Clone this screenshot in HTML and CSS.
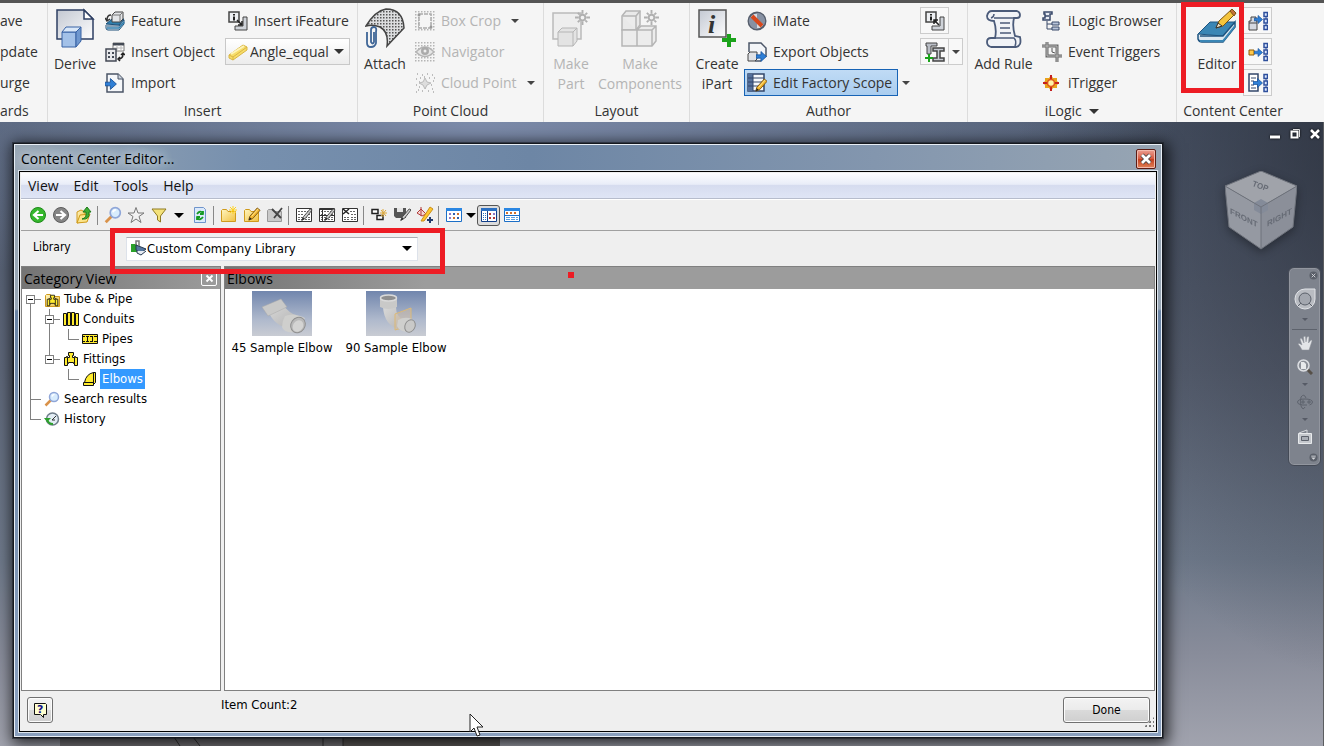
FILE: index.html
```html
<!DOCTYPE html>
<html lang="en">

<head>
  <meta charset="UTF-8">
  <meta name="viewport" content="width=device-width, initial-scale=1.0">
  <title>Content Center Editor</title>
  <link rel="stylesheet" href="styles.css">
</head>

<body>
  <!-- shared icon parts -->
  <svg class="defs" aria-hidden="true">
    <defs>
      <linearGradient id="g-page" x1="0" y1="0" x2="1" y2="1">
        <stop offset="0" stop-color="#c3c8d2" />
        <stop offset="1" stop-color="#fdfdfe" />
      </linearGradient>
      <linearGradient id="g-thumb" x1="0" y1="0" x2="0" y2="1">
        <stop offset="0" stop-color="#7186ad" />
        <stop offset=".65" stop-color="#b0bacd" />
        <stop offset="1" stop-color="#c9ccd3" />
      </linearGradient>
      <linearGradient id="g-pipe" x1="0" y1="0" x2="1" y2="1">
        <stop offset="0" stop-color="#d9d9d8" />
        <stop offset="1" stop-color="#b3b3b4" />
      </linearGradient>
      <linearGradient id="g-folder" x1="0" y1="0" x2="1" y2="1">
        <stop offset="0" stop-color="#fff6c0" />
        <stop offset="1" stop-color="#f0c040" />
      </linearGradient>
      <pattern id="dots" width="3" height="3" patternUnits="userSpaceOnUse">
        <rect width="1.500" height="1.500" fill="#b5b5b5" />
      </pattern>
      <pattern id="dots-dark" width="3" height="3" patternUnits="userSpaceOnUse">
        <rect width="3" height="3" fill="#dcdddf" />
        <rect width="1.500" height="1.500" fill="#555" />
      </pattern>
      <symbol id="magnifier" viewBox="0 0 16 16">
        <path d="M1.500 14.500l6-6" stroke="#d9924a" stroke-width="2.500" />
        <circle cx="10" cy="6" r="4.500" fill="#d8ecfd" stroke="#8fa6d8" stroke-width="1.500" />
        <path d="M8 5.500q.5-2 2.500-2" stroke="#fff" fill="none" stroke-width="1.500" />
      </symbol>
      <symbol id="pencil" viewBox="0 0 16 16">
        <path d="M3 14l1-4 8-9 3 2.500-8 9z" fill="#f3b62c" stroke="#7b5413" />
        <path d="M3 14l1-3 2 1.500z" fill="#222" />
        <path d="M6 10l7-8" stroke="#fde79a" />
      </symbol>
      <symbol id="pen" viewBox="0 0 16 16">
        <path d="M4 13l2-4 7-8 2 1-7 9z" fill="#ccc" stroke="#444" />
        <path d="M3.500 14l2-3.500 1.500 1z" fill="#222" />
      </symbol>
      <symbol id="folder" viewBox="0 0 18 18">
        <path d="M1.500 15.500v-11l1-1h4l1.500 2h7.500v10z" fill="url(#g-folder)" stroke="#cf9a1c" />
      </symbol>
      <symbol id="form" viewBox="0 0 18 18">
        <path d="M1.500 2.500h15v13h-15z" fill="#fff" stroke="#333" />
        <path d="M3 5.500h12M3 8.500h5m2 0h5M3 11.500h5m2 0h5M3 13.500h5m2 0h5" stroke="#666" stroke-dasharray="2 1" />
      </symbol>
      <symbol id="book" viewBox="0 0 20 20">
        <path d="M1 13l6-5h12l-5 6z" fill="#2f7fae" stroke="#1c4f78" />
        <path d="M1 14v3q0 2 2 2h11l5-6v-4l-5 6H2" fill="#e6eef4" stroke="#1c4f78" />
        <path d="M2 17h12l5-6" fill="none" stroke="#2f7fae" stroke-width="1.500" />
      </symbol>
      <symbol id="ladder" viewBox="0 0 6 20">
        <path d="M1 1.500h3.500v4H1zM1 8h3.500v4H1zM1 14.500h3.500v4H1z" fill="#dce8ff" stroke="#2e4f9c" stroke-width="1.500" />
        <path d="M3 6v2m0 4.500v2" stroke="#2e4f9c" />
      </symbol>
      <symbol id="arrow" viewBox="0 0 10 10">
        <path d="M0 3.500h4.500V.5L9.500 5l-5 4.500v-3H0z" fill="#2f7fd6" stroke="#164f96" stroke-width=".7" />
      </symbol>
      <symbol id="spark" viewBox="0 0 16 16">
        <path d="M8 0v4m0 8v4M0 8h4m8 0h4M3 3l2 2m6 6l2 2M3 13l2-2m6-6l2-2" stroke="#b0b0b0" stroke-width="2" />
        <circle cx="8" cy="8" r="3" fill="#f2f2f2" stroke="#b0b0b0" stroke-width="2" />
      </symbol>
      <symbol id="fitting" viewBox="0 0 16 16">
        <path d="M5.500 1.500h5v3h-1v2h2v-1h1v1h2v8h-3v-2h-1v-1h-5v1h-1v2h-3v-8h2v-1h1v1h2v-2h-1z" fill="#ffeb2e" stroke="#111" />
        <path d="M4.500 6.500v6m7-6v6" stroke="#111" />
      </symbol>
    </defs>
  </svg>

  <header class="ribbon">
    <section class="group cut">
      <div class="tools">
        <div class="stack">
          <button class="tool">ave</button>
          <button class="tool">pdate</button>
          <button class="tool">urge</button>
        </div>
      </div>
      <h2>ards</h2>
    </section>

    <section class="group">
      <div class="tools">
        <button class="big">
          <svg viewBox="0 0 40 40">
            <path d="M2 2h27l9 9v20H2z" fill="url(#g-page)" stroke="#2e3f63" stroke-width="1.500" />
            <path d="M29 2v9h9z" fill="#fff" stroke="#2e3f63" stroke-width="1.500" />
            <path d="M7 24h14v15H7z" fill="#a3c1e8" stroke="#3862a5" />
            <path d="M7 24l4-5h15l-5 5z" fill="#d9e7f8" stroke="#3862a5" />
            <path d="M21 24l5-5v14l-5 6z" fill="#6f97ce" stroke="#3862a5" />
          </svg>
          <span>Derive</span>
        </button>
        <div class="stack">
          <button class="tool">
            <svg viewBox="0 0 20 20">
              <use href="#book" />
              <path d="M7 4l3-3h8v7l-3 3H7z" fill="#e3e5e8" stroke="#444" />
              <path d="M7 4h8v7M15 4l3-3" fill="none" stroke="#777" />
              <path d="M2 9q0-5 4-5M0 7l2 3 3-2" fill="none" stroke="#333" stroke-width="1.500" />
            </svg>
            Feature
          </button>
          <button class="tool">
            <svg viewBox="0 0 20 20">
              <path d="M8 1h11v8H8z" fill="#fff" stroke="#777" />
              <path d="M8 1h11v2.500H8z" fill="#444a55" />
              <path d="M8 6h11M12 3v6m4-6v6" stroke="#bbb" />
              <path d="M1 7h10v12H1z" fill="#e8e9ec" stroke="#444a55" stroke-width="1.500" />
              <path d="M3 10h2v2H3zM3 14h2v2H3zM7 10h2v2H7zM7 14h2v2H7z" fill="#444a55" />
              <path d="M13 17q5 0 5-5M16 13l2-2 2 2M15 15l-2 2 2 2" fill="none" stroke="#222" stroke-width="1.500" />
            </svg>
            Insert Object
          </button>
          <button class="tool">
            <svg viewBox="0 0 20 20">
              <path d="M2 1h11l5 5v13H2z" fill="#f5f7fa" stroke="#4b5567" stroke-width="1.500" />
              <path d="M13 1v5h5" fill="#ccd3dd" stroke="#4b5567" />
              <use href="#arrow" x="0" y="5" width="12" height="12" />
            </svg>
            Import
          </button>
        </div>
        <div class="stack ifeature">
          <button class="tool">
            <svg viewBox="0 0 20 20">
              <path d="M1 1h10v10H1z" fill="#eef0f3" stroke="#444" stroke-width="1.500" />
              <path d="M6 3v1.500M6 5.500v4" stroke="#222" stroke-width="2" />
              <path d="M19 6h-4v9H7v4h12z" fill="#cfd3d9" stroke="#444" />
              <path d="M9 9l5 5m0-4v4h-4" stroke="#222" fill="none" stroke-width="1.500" />
            </svg>
            Insert iFeature
          </button>
          <label class="picker">
            <svg viewBox="0 0 20 20">
              <path d="M1 13L15 3l4 2v3L5 18l-4-2z" fill="#f7dd69" stroke="#d9b544" />
              <path d="M1 13l4 2v3M5 15L19 5" fill="none" stroke="#d9b544" />
              <path d="M3 12l13-8" stroke="#fdf4bb" stroke-width="2" />
            </svg>
            <select aria-label="Punch profile">
              <option>Angle_equal</option>
            </select>
            <i class="caret"></i>
          </label>
        </div>
      </div>
      <h2>Insert</h2>
    </section>

    <section class="group">
      <div class="tools">
        <button class="big">
          <svg viewBox="0 0 40 40">
            <path d="M1 18Q10 3 21 1q17 0 18 19L22 38q2-14-7-19-7-3-14-1z" fill="url(#dots-dark)" stroke="#444" stroke-width="1.500" />
            <path d="M9 24v10q-1 3-3 0V22q0-3 3-3t2 5v11q-1 4-5 4t-4-4V24" fill="none" stroke="#3f6697" stroke-width="1.800" />
          </svg>
          <span>Attach</span>
        </button>
        <div class="stack cloud">
          <div class="line">
            <button class="tool" disabled>
              <svg viewBox="0 0 20 20">
                <path d="M0 0h20v20H0z" fill="url(#dots)" />
                <path d="M4 3h12v14H4z" fill="#f5f5f5" stroke="#aaa" stroke-width="1.500" stroke-dasharray="4 1" />
                <circle cx="4" cy="4" r="1.500" fill="#999" />
                <circle cx="16" cy="16" r="1.500" fill="#999" />
              </svg>
              Box Crop
            </button>
            <i class="caret small"></i>
          </div>
          <button class="tool" disabled>
            <svg viewBox="0 0 20 20">
              <path d="M0 0h20v20H0z" fill="url(#dots)" />
              <path d="M1 10q9-10 18 0-9 9-18 0z" fill="#e6e6e6" stroke="#b5b5b5" stroke-width="1.500" />
              <circle cx="10" cy="9" r="4" fill="#aaa" />
              <circle cx="10" cy="9" r="1.500" fill="#eee" />
            </svg>
            Navigator
          </button>
          <div class="line">
            <button class="tool" disabled>
              <svg viewBox="0 0 20 20">
                <path d="M2 1h1M7 2h1M12 1h1M17 2h1M1 6h1M5 5h1M14 5h1M18 8h1M1 12h1M4 9h1M3 17h1M7 18h1M13 18h1M17 16h1M16 12h1M10 15h1M9 4h1M4 14h1M18 19h1M1 19h1M19 5h1" stroke="#aaa" stroke-width="1.500" />
                <path d="M10 5l2 4 4 1-4 2-2 4-2-4-4-2 4-1z" fill="#ddd" stroke="#bbb" />
              </svg>
              Cloud Point
            </button>
            <i class="caret small"></i>
          </div>
        </div>
      </div>
      <h2>Point Cloud</h2>
    </section>

    <section class="group">
      <div class="tools">
        <button class="big" disabled>
          <svg viewBox="0 0 40 40">
            <path d="M2 5h28v26H2z" fill="#eee" stroke="#bbb" stroke-width="1.500" />
            <path d="M7 24h15v14H7zM7 24l4-4h15l-4 4M22 24l4-4v13l-4 5" fill="#e3e3e3" stroke="#b5b5b5" />
            <use href="#spark" x="24" y="2" width="15" height="15" />
          </svg>
          <span>Make<br>Part</span>
        </button>
        <button class="big wide" disabled>
          <svg viewBox="0 0 40 40">
            <path d="M2 8l4-5h14v14l-4 5H2z" fill="#e9e9e9" stroke="#b5b5b5" stroke-width="1.500" />
            <path d="M2 8h14v14M16 8l4-5M2 22h15v16H2zM17 22l4-4h15v15l-4 5H17zM17 22h15v16M32 22l4-4" fill="#ececec" stroke="#b5b5b5" stroke-width="1.500" />
            <use href="#spark" x="24" y="2" width="15" height="15" />
          </svg>
          <span>Make<br>Components</span>
        </button>
      </div>
      <h2>Layout</h2>
    </section>

    <section class="group">
      <div class="tools">
        <button class="big">
          <svg viewBox="0 0 40 40">
            <path d="M2 2h27v27H2z" fill="url(#g-page)" stroke="#555" stroke-width="1.500" />
            <text x="11" y="25" class="serif-i">i</text>
            <path d="M32 26v13M25 32h14" stroke="#1ba31b" stroke-width="4" />
          </svg>
          <span>Create<br>iPart</span>
        </button>
        <div class="stack">
          <button class="tool">
            <svg viewBox="0 0 20 20">
              <circle cx="10" cy="10" r="8.500" fill="#d5dae2" stroke="#555d6b" stroke-width="2" />
              <path d="M10 2a8 8 0 0 1 7 12L10 10zM10 18a8 8 0 0 1-7-12l7 4z" fill="#8791a3" />
              <path d="M5 5l10 10" stroke="#d8481c" stroke-width="4" />
            </svg>
            iMate
          </button>
          <button class="tool">
            <svg viewBox="0 0 20 20">
              <path d="M2 10V1h12l5 5v9M8 19h6" fill="#f3f5f8" stroke="#4b5567" stroke-width="1.500" />
              <path d="M1 12l2-2h7v7l-2 2H1z" fill="#dfe1e5" stroke="#444" />
              <use href="#arrow" x="9" y="9" width="11" height="11" />
            </svg>
            Export Objects
          </button>
          <div class="line">
            <button class="tool active">
              <svg viewBox="0 0 20 20">
                <path d="M1 1h16v17H1z" fill="#f5f8fc" stroke="#33476b" stroke-width="1.500" />
                <path d="M1 1h5v17H1z" fill="#54709c" />
                <path d="M1 5h16M1 9h16M1 13h16M6 1v17" stroke="#33476b" />
                <use href="#pencil" x="6" y="5" width="15" height="15" />
              </svg>
              Edit Factory Scope
            </button>
            <i class="caret small"></i>
          </div>
        </div>
        <div class="stack boxes">
          <button class="box" aria-label="Extract iFeature">
            <svg viewBox="0 0 20 20">
              <path d="M1 1h10v10H1z" fill="#eef0f3" stroke="#444" stroke-width="1.500" />
              <path d="M6 3v1.500M6 5.500v4" stroke="#222" stroke-width="2" />
              <path d="M19 6h-4v9H7v4h12z" fill="#cfd3d9" stroke="#444" />
              <path d="M14 14L9 9m0 4V9h4" stroke="#222" fill="none" stroke-width="1.500" />
            </svg>
          </button>
          <div class="split">
            <button class="box" aria-label="Structural shape">
              <svg viewBox="0 0 20 20">
                <path d="M12 1H1v3h1v8h4V4h6z" fill="#b9bdc5" stroke="#444" />
                <path d="M8 6h11v3h-4v7h4v3H8v-3h4V9H8z" fill="#c5c9d0" stroke="#444" stroke-width="1.500" />
                <path d="M4 12v8M0 16h8" stroke="#1ba31b" stroke-width="2" />
              </svg>
            </button>
            <button class="box thin" aria-label="More shapes"><i class="caret small"></i></button>
          </div>
        </div>
      </div>
      <h2>Author</h2>
    </section>

    <section class="group">
      <div class="tools">
        <button class="big rule">
          <svg viewBox="0 0 40 40">
            <path d="M8 3h25q3 1 3 4t-3 3h-3q-2 8 1 18l5 1q2 9-4 10H7q-4-1-4-5t4-4h4q2-8-1-17-7 0-7-5 1-5 5-5z" fill="#f1f3f7" stroke="#4b5b7a" stroke-width="1.800" />
            <path d="M7 10q3-1 3-4M10 10h20M11 30h19q3 3 1 8M16 15h10M16 20h10M16 25h11" fill="none" stroke="#4b5b7a" stroke-width="1.500" />
          </svg>
          <span>Add Rule</span>
        </button>
        <div class="stack">
          <button class="tool">
            <svg viewBox="0 0 20 20">
              <path d="M2 1h8v2H8v6H1V7h2V3H2zM3 5h4" fill="#e8ecf4" stroke="#3a4a6b" stroke-width="1.500" />
              <path d="M5 10v8h5M5 13h5" fill="none" stroke="#3a4a6b" />
              <path d="M10 11h7v3h-7zM10 16h7v3h-7z" fill="#b9c5da" stroke="#3a4a6b" />
            </svg>
            iLogic Browser
          </button>
          <button class="tool">
            <svg viewBox="0 0 20 20">
              <path d="M5 0v14h15M0 4h15v16" fill="none" stroke="#666" stroke-width="3" />
              <path d="M5 0v14h15M0 4h15v16" fill="none" stroke="#bbb" />
              <path d="M10 6v4l3 1" fill="none" stroke="#555" />
            </svg>
            Event Triggers
          </button>
          <button class="tool">
            <svg viewBox="0 0 20 20">
              <path d="M9 2l2 3h4v3l2 2-2 2v3h-4l-2 3-2-3H3v-3l-2-2 2-2V5h4z" fill="#e8a31c" />
              <path d="M9 2v16M1 10h16" stroke="#c41f1f" stroke-width="2" />
              <circle cx="9" cy="10" r="3.500" fill="#fff2a8" stroke="#e0541a" stroke-width="1.500" />
            </svg>
            iTrigger
          </button>
        </div>
      </div>
      <h2>iLogic <i class="caret"></i></h2>
    </section>

    <section class="group last">
      <div class="tools">
        <button class="big editor">
          <svg viewBox="0 0 40 40">
            <path d="M1 26l12-12h25L26 28z" fill="#3a86b5" stroke="#1e5480" />
            <path d="M1 26v5q1 3 4 3h21l12-15v-5L26 28H3" fill="#dce7f0" stroke="#1e5480" stroke-width="1.500" />
            <path d="M3 33h23l12-15" fill="none" stroke="#3a86b5" stroke-width="2" />
            <path d="M19 20l3-7L35 1l4 4-13 13z" fill="#f5c53d" stroke="#7b5413" />
            <path d="M33 3l2-2 4 4-2 3z" fill="#c4713b" stroke="#7b5413" />
            <path d="M19 20l2-5 4 3z" fill="#f1e1c0" stroke="#333" />
          </svg>
          <span>Editor</span>
        </button>
        <div class="stack boxes">
          <button class="box" aria-label="Publish part">
            <svg viewBox="0 0 20 20">
              <path d="M3 6h5v4h1v9H1v-9h2z" fill="#d5d9e0" stroke="#444" />
              <path d="M1 12h8" stroke="#444" />
              <use href="#arrow" x="6" y="4" width="9" height="9" />
              <use href="#ladder" x="15" y="0" width="6" height="20" />
            </svg>
          </button>
          <button class="box" aria-label="Publish feature">
            <svg viewBox="0 0 20 20">
              <path d="M1 8h5v5H1z" fill="#ffc94a" stroke="#8a5b0a" />
              <use href="#arrow" x="6" y="6" width="9" height="9" />
              <use href="#ladder" x="15" y="0" width="6" height="20" />
            </svg>
          </button>
          <button class="box" aria-label="Batch publish">
            <svg viewBox="0 0 20 20">
              <path d="M1 1h9v17H1z" fill="#fff" stroke="#33476b" stroke-width="1.500" />
              <path d="M3 5h5M3 8h3M3 12h3M3 15h5" stroke="#33476b" />
              <use href="#arrow" x="5" y="5" width="10" height="10" />
              <use href="#ladder" x="15" y="0" width="6" height="20" />
            </svg>
          </button>
        </div>
      </div>
      <h2>Content Center</h2>
    </section>
  </header>

  <main class="workspace">
    <svg class="floor" viewBox="0 0 500 9" aria-hidden="true">
      <path d="M60 0h440v9H60z" fill="#77767a" />
      <path d="M343 0h157v9H343z" fill="#605d5b" />
      <path d="M174 0l6 9M193 0l7 9M323 0v9M343 0v9" stroke="#333" fill="none" />
    </svg>

    <section class="dialog">
      <div class="titlebar">
        <h1>Content Center Editor...</h1>
        <button class="close" aria-label="Close">
          <svg viewBox="0 0 12 12">
            <path d="M2 2l8 8M10 2l-8 8" stroke="#444" stroke-width="4.500" />
            <path d="M2 2l8 8M10 2l-8 8" stroke="#fff" stroke-width="2.800" />
          </svg>
        </button>
      </div>

      <div class="frame">
        <nav class="menu">
          <a href="#">View</a>
          <a href="#">Edit</a>
          <a href="#">Tools</a>
          <a href="#">Help</a>
        </nav>

        <div class="toolbar">
          <button aria-label="Back">
            <svg viewBox="0 0 18 18">
              <circle cx="9" cy="9" r="7.500" fill="#35b82c" stroke="#1f8a1b" />
              <path d="M14 9H6m3.500-4L5 9l4.500 4" stroke="#fff" stroke-width="2.200" fill="none" />
            </svg>
          </button>
          <button aria-label="Forward">
            <svg viewBox="0 0 18 18">
              <circle cx="9" cy="9" r="7.500" fill="#858585" stroke="#5c5c5c" />
              <path d="M4 9h8M8.500 5L13 9l-4.500 4" stroke="#fff" stroke-width="2.200" fill="none" />
            </svg>
          </button>
          <button aria-label="Up one level">
            <svg viewBox="0 0 18 18">
              <path d="M2 17V6l4-2 4 2v9z" fill="url(#g-folder)" stroke="#cf9a1c" />
              <path d="M2 17l3-8 10-1-3 8z" fill="#fbe48a" stroke="#cf9a1c" />
              <path d="M7 13q5-1 4-7H8l4-5 4 5h-2q1 8-7 7z" fill="#3fae33" stroke="#1c7a18" />
            </svg>
          </button>
          <i class="sep"></i>
          <button aria-label="Search"><svg viewBox="0 0 18 18"><use href="#magnifier" width="18" height="18" /></svg></button>
          <button aria-label="Favorites">
            <svg viewBox="0 0 18 18">
              <path d="M9 1.500l2 5.500h6l-5 3.500 2 6L9 13l-5 3.500 2-6L1 7h6z" fill="#f2f2f2" stroke="#777" />
            </svg>
          </button>
          <button aria-label="Filter">
            <svg viewBox="0 0 18 18">
              <path d="M2 3h14l-5.500 7v6l-3-2v-4z" fill="#f4e27a" stroke="#8f7a20" />
            </svg>
          </button>
          <button class="drop" aria-label="Filter list"><i class="caret"></i></button>
          <button aria-label="Refresh">
            <svg viewBox="0 0 18 18">
              <path d="M3.500 1.500h9l2 2v13h-11z" fill="#dbe9fb" stroke="#6f94cb" />
              <path d="M6 8q3-4 6-1V5m0 3H9M12 11q-3 4-6 1v2m0-3h3" stroke="#159a22" stroke-width="1.800" fill="none" />
            </svg>
          </button>
          <i class="sep"></i>
          <button aria-label="New category">
            <svg viewBox="0 0 18 18">
              <use href="#folder" />
              <path d="M13 0v8M9 4h8M10 1l6 6M16 1l-6 6" stroke="#ffd21f" />
            </svg>
          </button>
          <button aria-label="Edit category">
            <svg viewBox="0 0 18 18"><use href="#folder" /><use href="#pencil" x="3" y="1" width="15" height="15" /></svg>
          </button>
          <button aria-label="Delete category">
            <svg viewBox="0 0 18 18">
              <path d="M1.500 15.500v-11l1-1h4l1.500 2h7.500v10z" fill="#c9c9c9" stroke="#999" />
              <path d="M6 3l9 9M16 2l-8 10" stroke="#444" stroke-width="1.800" />
            </svg>
          </button>
          <i class="sep"></i>
          <button aria-label="Edit table">
            <svg viewBox="0 0 18 18"><use href="#form" /><use href="#pen" x="3" y="2" width="15" height="15" /></svg>
          </button>
          <button aria-label="Family table">
            <svg viewBox="0 0 18 18">
              <use href="#form" />
              <path d="M4.500 3v12M2 3.500h14M2 9.500h14" stroke="#333" />
              <use href="#pen" x="3" y="2" width="15" height="15" />
            </svg>
          </button>
          <button aria-label="Delete family">
            <svg viewBox="0 0 18 18">
              <use href="#form" />
              <path d="M2 3h7v6H2z" fill="#fff" />
              <path d="M2 3l6 5M8 3L2 8" stroke="#222" stroke-width="1.500" />
            </svg>
          </button>
          <i class="sep"></i>
          <button aria-label="Map category">
            <svg viewBox="0 0 18 18">
              <path d="M2 3.500h6v4H2zM7 9.500h6v4H7z" fill="#fff" stroke="#222" stroke-width="1.500" />
              <path d="M13 3v8M10 7h7M11 4l5 6M16 4l-5 6" stroke="#dba638" />
            </svg>
          </button>
          <button aria-label="Save as">
            <svg viewBox="0 0 18 18">
              <path d="M1 2h12v10H3l-2-2z" fill="#555" />
              <path d="M4 2h6v4H4z" fill="#e5e5e5" />
              <use href="#pen" x="4" y="2" width="15" height="15" />
            </svg>
          </button>
          <button aria-label="Material guide">
            <svg viewBox="0 0 18 18">
              <path d="M5 1v9M1 7l4-4 5 5-4 2z" fill="#f4d6d2" stroke="#b23a3a" />
              <path d="M5 15L14 1l3 2-9 12z" fill="#ffc62b" stroke="#c98f1d" />
              <path d="M14 11v6M11 14h6" stroke="#223a6c" stroke-width="2" />
            </svg>
          </button>
          <i class="sep"></i>
          <button aria-label="Views">
            <svg viewBox="0 0 18 18">
              <path d="M1.500 2.500h15v13h-15z" fill="#fff" stroke="#1c6fc7" />
              <path d="M1 2h16v3H1z" fill="#2a86e2" />
              <path d="M4 8h2M4 12h2" stroke="#8f78c8" stroke-width="2" />
              <path d="M8 8h2M12 12h2" stroke="#2f5fae" stroke-width="2" />
              <path d="M12 8h2M8 12h2" stroke="#d0702c" stroke-width="2" />
            </svg>
          </button>
          <button class="drop near" aria-label="View list"><i class="caret"></i></button>
          <button class="pressed" aria-label="Tree view">
            <svg viewBox="0 0 18 18">
              <path d="M1.500 2.500h15v13h-15z" fill="#fff" stroke="#123f8a" />
              <path d="M1 2h16v3H1z" fill="#2a6fc2" />
              <path d="M7.500 5v10" stroke="#123f8a" />
              <path d="M3 7.500h3M3 9.500h3M3 11.500h3M3 13.500h3" stroke="#2a6fc2" stroke-dasharray="1 1" />
              <path d="M9 8h2M13 12h2M9 12h2" stroke="#b23a3a" stroke-width="2" />
              <path d="M13 8h2" stroke="#8f78c8" stroke-width="2" />
            </svg>
          </button>
          <button aria-label="Details view">
            <svg viewBox="0 0 18 18">
              <path d="M1.500 2.500h15v13h-15z" fill="#fff" stroke="#1c6fc7" />
              <path d="M1 2h16v3H1z" fill="#2a86e2" />
              <path d="M3 7h12" stroke="#d0702c" stroke-width="2" stroke-dasharray="2 2" />
              <path d="M1 9.500h16" stroke="#1c6fc7" />
              <path d="M3 11.500h12M3 13.500h12" stroke="#5b9fe0" stroke-dasharray="4 1" />
            </svg>
          </button>
        </div>

        <div class="library">
          <label for="library">Library</label>
          <div class="marked">
            <div class="combo">
              <svg viewBox="0 0 16 16">
                <path d="M0 4h6v8H0z" fill="#2aa02a" />
                <path d="M5 5l10 4-5 4-5-3z" fill="#55779f" stroke="#26384f" />
                <path d="M6 11v2l4 2 5-4" fill="#e7ebf2" stroke="#26384f" />
                <path d="M5 5V1h3v5" fill="none" stroke="#777" stroke-width="1.500" />
              </svg>
              <select id="library">
                <option>Custom Company Library</option>
              </select>
              <i class="caret"></i>
            </div>
          </div>
        </div>

        <div class="panes">
          <aside class="categories">
            <header>
              <h3>Category View</h3>
              <button aria-label="Close category view">
                <svg viewBox="0 0 12 12"><path d="M2 2l8 8M10 2l-8 8" stroke="#fff" stroke-width="2.500" /></svg>
              </button>
            </header>
            <ul class="tree">
              <li>
                <i class="cell first"><button aria-label="Collapse"></button></i>
                <svg viewBox="0 0 16 16"><use href="#folder" width="18" height="18" /><use href="#fitting" x="2" y="3" width="13" height="13" /></svg>
                <span>Tube &amp; Pipe</span>
              </li>
              <li>
                <i class="cell trunk"></i><i class="cell tee"><button aria-label="Collapse"></button></i>
                <svg viewBox="0 0 16 16">
                  <path d="M.5 2.500h3v12h-3zM4.500 1.500h3v13h-3zM8.500 1.500h3v13h-3zM12.500 2.500h3v12h-3z" fill="#ffeb2e" stroke="#111" />
                </svg>
                <span>Conduits</span>
              </li>
              <li>
                <i class="cell trunk"></i><i class="cell trunk"></i><i class="cell end"></i>
                <svg viewBox="0 0 16 16">
                  <path d="M.5 3.500h15v9H.5z" fill="#ffeb2e" stroke="#111" />
                  <path d="M0 5.500h16M0 10.500h16" stroke="#111" stroke-dasharray="3 1" />
                  <path d="M5.500 5v6m5-6v6" stroke="#111" />
                </svg>
                <span>Pipes</span>
              </li>
              <li>
                <i class="cell trunk"></i><i class="cell end"><button aria-label="Collapse"></button></i>
                <svg viewBox="0 0 16 16"><use href="#fitting" /></svg>
                <span>Fittings</span>
              </li>
              <li>
                <i class="cell trunk"></i><i class="cell"></i><i class="cell end"></i>
                <svg viewBox="0 0 16 16">
                  <path d="M2.500 11.500Q4 3 11.500 1.500v10zM1.500 11.500h10v3h-10zM11.500 1.500h2v10l-2 2z" fill="#ffeb2e" stroke="#111" />
                </svg>
                <span class="selected">Elbows</span>
              </li>
              <li>
                <i class="cell tee"></i>
                <svg viewBox="0 0 16 16"><use href="#magnifier" /></svg>
                <span>Search results</span>
              </li>
              <li>
                <i class="cell end"></i>
                <svg viewBox="0 0 16 16">
                  <circle cx="8.500" cy="8" r="6" fill="#e3edf5" stroke="#6f7d8a" stroke-width="1.500" />
                  <path d="M8 9l4-4M8 9h3" fill="none" stroke="#333" />
                  <path d="M0 7h7L3 11z" fill="#2da02d" />
                  <path d="M3 8q1 5 6 5" fill="none" stroke="#2da02d" stroke-width="2" />
                </svg>
                <span>History</span>
              </li>
            </ul>
          </aside>

          <section class="parts">
            <header>
              <h3>Elbows</h3>
            </header>
            <div class="items">
              <figure>
                <svg viewBox="0 0 60 45">
                  <path d="M0 0h60v45H0z" fill="url(#g-thumb)" />
                  <path d="M16 20l14-7q8 10 14 11l-6 13q-15-1-22-17z" fill="url(#g-pipe)" />
                  <path d="M10 16L29 8l6 8-19 9z" fill="#c9c9c8" stroke="#a9a9a9" stroke-width=".5" />
                  <path d="M33 25q8-4 20 2l-8 14q-13 2-15-5 0-6 3-11z" fill="#cfcfcd" />
                  <ellipse cx="46" cy="34" rx="7" ry="8" fill="#b9b9b9" stroke="#8f8f8f" transform="rotate(35 46 34)" />
                  <ellipse cx="46" cy="35" rx="5" ry="6" fill="#d4d4d3" transform="rotate(35 46 35)" />
                </svg>
                <figcaption>45 Sample Elbow</figcaption>
              </figure>
              <figure>
                <svg viewBox="0 0 60 45">
                  <path d="M0 0h60v45H0z" fill="url(#g-thumb)" />
                  <path d="M17 16h13q0 10 8 13l-4 10Q18 34 17 16z" fill="url(#g-pipe)" />
                  <path d="M14 7v9q8 4 17 0V7z" fill="#c9c9c8" />
                  <ellipse cx="22.500" cy="7" rx="8" ry="3" fill="#8f8f8f" stroke="#dadada" stroke-width="1.500" />
                  <path d="M29 23l16-6v17l-16 5z" fill="#d8bfa0" fill-opacity=".45" stroke="#dcb977" />
                  <path d="M32 29q7-4 14-1l-2 13q-11 0-13-6z" fill="#cfcfcd" />
                  <ellipse cx="44" cy="35" rx="5" ry="6.500" fill="#c9c9c8" stroke="#8c8c8c" transform="rotate(25 44 35)" />
                </svg>
                <figcaption>90 Sample Elbow</figcaption>
              </figure>
            </div>
          </section>
        </div>

        <footer>
          <button class="help" aria-label="Help">
            <svg viewBox="0 0 16 16">
              <path d="M2.500 1.500h11l1 1v10h-3v3l-3-3h-6z" fill="#ffffd0" stroke="#111" />
              <text x="5" y="11">?</text>
            </svg>
          </button>
          <output>Item Count:2</output>
          <button class="done">Done</button>
          <svg class="cursor" viewBox="0 0 14 24" aria-hidden="true">
            <path d="M1 1v18l4-4 3 8 3-1-3-8h6z" fill="#fff" stroke="#222" />
          </svg>
          <i class="grip"></i>
        </footer>
      </div>
    </section>

    <aside class="view-tools">
      <div class="win-buttons">
        <button aria-label="Minimize"><svg viewBox="0 0 12 12"><path d="M1 9h10" stroke="#fff" stroke-width="3" /></svg></button>
        <button aria-label="Restore"><svg viewBox="0 0 12 12"><path d="M4 1.500h6.500V9" fill="none" stroke="#ddd" /><path d="M2.500 3.500h6v6h-6z" fill="none" stroke="#fff" stroke-width="2" /></svg></button>
        <button aria-label="Close view"><svg viewBox="0 0 12 12"><path d="M2 2l8 8M10 2l-8 8" stroke="#fff" stroke-width="2.500" /></svg></button>
      </div>

      <svg class="cube" viewBox="0 0 72 80">
        <path d="M36 0l36 15-36 21L0 15z" fill="#a0a3aa" />
        <path d="M0 15l36 21v42L4 56z" fill="#9599a2" />
        <path d="M72 15L36 36v42l32-22z" fill="#8b8f99" />
        <path d="M29 32l7-4 7 4v7l-7 4-7-4z" fill="#848b99" />
        <path d="M36 0l36 15-36 21L0 15zM0 15l4 41 32 22 32-22 4-41M36 36v42" fill="none" stroke="#6f737c" />
        <text x="5" y="40" transform="skewY(27)">FRONT</text>
        <text x="42" y="78" transform="skewY(-28)">RIGHT</text>
        <text x="27" y="18" transform="rotate(20 36 16)">TOP</text>
      </svg>

      <nav class="navbar">
        <button aria-label="Close bar"><svg class="mini" viewBox="0 0 10 10"><circle cx="5" cy="5" r="4.500" fill="#5b606a" /><path d="M3 3l4 4M7 3L3 7" stroke="#d5d7db" /></svg></button>
        <button aria-label="Steering wheel">
          <svg class="wheel" viewBox="0 0 22 22">
            <path d="M11 1h10v10a10 10 0 1 1-10-10z" fill="#b9bcc2" stroke="#e2e4e8" />
            <circle cx="11" cy="11" r="6" fill="#a3a7af" stroke="#5b606a" />
            <path d="M4 18l3-3m11 3l-3-3" stroke="#5b606a" />
          </svg>
        </button>
        <i class="caret small"></i>
        <hr>
        <button aria-label="Pan">
          <svg viewBox="0 0 16 16">
            <path d="M5 15Q3 11 1 9q1-1.500 4 1L3 4q1-1.500 2 0l2 4-.5-6q1.500-1.500 2 0l.5 5 1-5q1.500-1 2 0l-.5 6L14 5q1.500 0 1 1l-3 9z" fill="#e3e5e8" stroke="#8c9098" stroke-width=".5" />
          </svg>
        </button>
        <button aria-label="Zoom">
          <svg viewBox="0 0 16 16">
            <path d="M10 10l5 5" stroke="#565048" stroke-width="3" />
            <circle cx="6.500" cy="6.500" r="5.500" fill="#8c9098" stroke="#dcdee2" stroke-width="1.500" />
            <path d="M4 3h3l2 2v5H4z" fill="#e8eaec" />
          </svg>
        </button>
        <i class="caret small"></i>
        <button aria-label="Orbit">
          <svg viewBox="0 0 16 16">
            <path d="M10 11H5Q0 10 .5 8 1 5 8 5t7.500 3q0 2-3 3" fill="none" stroke="#5d626c" />
            <path d="M8 13q-2 4-4-1-1-5 0-9 3-4 5 1" fill="none" stroke="#5d626c" />
            <path d="M6 6v4M4 8h4M12 6v4M10 8h4" stroke="#5d626c" />
          </svg>
        </button>
        <i class="caret small"></i>
        <button aria-label="Look at">
          <svg viewBox="0 0 16 16">
            <path d="M2 4l8-3v3" fill="none" stroke="#d5d7db" />
            <path d="M1.500 4.500h13v10h-13z" fill="#c5c8cd" stroke="#e8eaec" />
            <path d="M4.500 7.500h7v4h-7z" fill="#a9adb5" stroke="#5d626c" />
          </svg>
        </button>
        <button class="more" aria-label="Customize"><svg class="mini" viewBox="0 0 10 10"><circle cx="5" cy="5" r="4.500" fill="#5b606a" /><path d="M2.500 3.500h5" stroke="#d5d7db" /><path d="M2.500 5h5L5 7.500z" fill="#d5d7db" /></svg></button>
      </nav>
    </aside>
  </main>
</body>

</html>
```
FILE: styles.css
```css
*,
*::before,
*::after {
  box-sizing: border-box;
}

body {
  margin: 0;
  min-height: 100vh;
  display: flex;
  flex-direction: column;
  font-family: "Open Sans", "Noto Sans", sans-serif;
  font-size: 14px;
  color: #333;
}

button,
select {
  font: inherit;
  color: inherit;
  background: none;
  border: none;
  padding: 0;
  margin: 0;
}

h1,
h2,
h3,
ul,
figure {
  margin: 0;
  padding: 0;
  font-weight: normal;
}

svg {
  display: block;
  flex: none;
}

.defs {
  position: absolute;
  width: 0;
  height: 0;
}

.caret {
  flex: none;
  display: inline-block;
  border: 5px solid transparent;
  border-top-color: #333;
  border-bottom: none;
}

.caret.small {
  border-width: 4px;
  border-top-color: #444;
  border-bottom: none;
}

/* ribbon */
.ribbon {
  display: grid;
  grid-template-columns: minmax(0, 48fr) minmax(0, 310fr) minmax(0, 186fr) minmax(0, 146fr) minmax(0, 278fr) minmax(0, 209fr) minmax(0, 112fr) minmax(0, 35fr);
  border-top: 3px solid #555;
  background: #f5f5f5;
}

.group {
  border-right: 1px solid #dcdcdc;
  white-space: nowrap;
}

.group.last {
  border-right: none;
}

.group h2 {
  font-size: 14px;
  line-height: 24px;
  height: 23px;
  text-align: center;
}

.group.cut h2 {
  text-align: left;
}

.group h2 .caret {
  margin: 0 0 2px 4px;
}

.tools {
  display: flex;
  padding-top: 4px;
  height: 96px;
}

.big {
  width: 54px;
  display: flex;
  flex-direction: column;
  align-items: center;
  line-height: 20px;
}

.big svg {
  width: 40px;
  height: 40px;
  margin: 1px 0 6px;
}

.big.wide {
  width: 84px;
}

.big.rule {
  width: 71px;
}

.big:disabled,
.tool:disabled {
  color: #b4b4b4;
}

.serif-i {
  font: italic bold 26px "Liberation Serif", serif;
  fill: #333;
}

.stack {
  display: flex;
  flex-direction: column;
  align-items: flex-start;
  gap: 4px;
}

.stack.ifeature {
  margin-left: 4px;
}

.line {
  display: flex;
  align-items: center;
  gap: 4px;
}

.tool {
  display: flex;
  align-items: center;
  gap: 6px;
  height: 27px;
  padding: 0 5px 0 2px;
  border: 1px solid transparent;
  white-space: nowrap;
}

.cut .tool {
  padding: 0;
  border: none;
}

.tool svg,
.box svg {
  width: 20px;
  height: 20px;
}

.tool.active {
  background: linear-gradient(#c0dbf5, #aacdef);
  border-color: #1763b5;
}

.picker {
  position: relative;
  display: flex;
  align-items: center;
  width: 125px;
  height: 27px;
  border: 1px solid #c8c8c8;
  background: linear-gradient(#fff, #ececec);
}

.picker svg {
  position: absolute;
  left: 2px;
  width: 20px;
  height: 20px;
}

.picker select,
.combo select {
  appearance: none;
  width: 100%;
  height: 100%;
  padding-left: 24px;
}

.picker .caret {
  position: absolute;
  right: 5px;
}

.boxes {
  margin-left: auto;
  padding-right: 4px;
}

.box {
  width: 29px;
  height: 27px;
  display: flex;
  align-items: center;
  justify-content: center;
  border: 1px solid #ccc;
  background: #f8f8f8;
}

.split {
  display: flex;
}

.box.thin {
  width: 14px;
  border-left: none;
}

.last .boxes {
  margin-left: 0;
}

.editor {
  position: relative;
  width: 66px;
  padding-left: 14px;
}

.editor::after {
  content: "";
  position: absolute;
  left: 4px;
  top: -5px;
  width: 63px;
  height: 91px;
  border: 5px solid #ed1c24;
}

/* drawing area behind the dialog */
.workspace {
  position: relative;
  flex: 1;
  display: flex;
  border-right: 1px solid #5b5d60;
  background:
    radial-gradient(ellipse 700px 200px at 36% 0, #7c8baa, transparent),
    radial-gradient(ellipse 360px 560px at 104% 0, rgba(38, 42, 52, .8), transparent),
    linear-gradient(#4f5b70, #5e6779 40%, #6e798a 70%, #888c9a 85%, #a1a3ae);
}

.floor {
  position: absolute;
  left: 0;
  bottom: 0;
  width: 500px;
  height: 9px;
}

.dialog {
  position: relative;
  flex: 1;
  display: flex;
  flex-direction: column;
  margin: 21px 0 8px 13px;
  padding: 0 5px 5px;
  border: 1px solid #15181e;
  outline: 1px solid rgba(20, 24, 32, .5);
  background:
    linear-gradient(transparent 165px, #6a84a5 167px, #8aa0bf),
    linear-gradient(90deg, #98a6b4, #7790ae 20%, #6d86a5 45%, #8396ae 75%, #97a5b3);
  box-shadow: inset 0 0 0 1px #e8eef5, 2px 3px 14px 3px rgba(0, 0, 0, .75);
}

.titlebar {
  display: flex;
  justify-content: space-between;
  align-items: center;
  height: 27px;
  padding: 2px 1px 0 2px;
}

.titlebar h1 {
  font-size: 14px;
  color: #000;
  text-shadow: 0 0 8px #d5dde6, 0 0 12px #d5dde6, 0 0 16px #d5dde6;
}

.close {
  width: 20px;
  height: 20px;
  display: flex;
  align-items: center;
  justify-content: center;
  border: 1px solid #5c1c14;
  border-radius: 2px;
  background: linear-gradient(#eba093, #d7563c 50%, #c23c1c 50%, #e28358);
  box-shadow: inset 0 0 0 1px #f2b9ac;
}

.close svg {
  width: 12px;
  height: 12px;
}

.frame {
  flex: 1;
  display: flex;
  flex-direction: column;
  padding: 1px;
  border: 1px solid #000;
  outline: 1px solid #dde5ee;
  background: #efefef;
  font-family: "DejaVu Sans Condensed", "DejaVu Sans", sans-serif;
  font-size: 13px;
  color: #000;
}

.menu {
  display: flex;
  gap: 15px;
  height: 26px;
  padding-left: 7px;
  align-items: center;
  font-family: "Open Sans", sans-serif;
  font-size: 14px;
  background: linear-gradient(#fdfdff, #e9edf8 45%, #d6dcef 50%, #dfe5f5);
  border-bottom: 1px solid #b6bccc;
}

.menu a {
  color: #111;
  text-decoration: none;
}

.toolbar {
  display: flex;
  align-items: center;
  height: 32px;
  padding: 0 0 0 5px;
  border-top: 1px solid #fff;
  border-bottom: 1px solid #a0a0a0;
}

.toolbar button {
  width: 23px;
  height: 21px;
  display: flex;
  align-items: center;
  justify-content: center;
}

.toolbar svg {
  width: 18px;
  height: 18px;
}

.toolbar .drop {
  width: 18px;
}

.toolbar .drop.near {
  width: 12px;
}

.toolbar .caret,
.combo .caret {
  border-top-color: #000;
}

.toolbar .pressed {
  border: 1px solid #555;
  border-radius: 3px;
  background: #dcdcdc;
}

.sep {
  width: 1px;
  height: 19px;
  margin: 0 3px 0 2px;
  background: #888;
}

.library {
  display: flex;
  align-items: center;
  height: 35px;
  padding-left: 12px;
}

.library label {
  width: 93px;
  padding-bottom: 4px;
  font-size: 12px;
}

/* highlighted picker */
.marked {
  position: relative;
}

.marked::before {
  content: "";
  position: absolute;
  left: -16px;
  top: -9px;
  width: 335px;
  height: 46px;
  border: 5px solid #ed1c24;
  pointer-events: none;
  z-index: 1;
}

.marked::after {
  content: "";
  position: absolute;
  left: 442px;
  top: 35px;
  width: 6px;
  height: 6px;
  background: #ed1c24;
  z-index: 1;
}

.combo {
  display: flex;
  align-items: center;
  position: relative;
  width: 292px;
  height: 24px;
  border: 1px solid #dde2ea;
  border-top-color: #abadb3;
  background: #fff;
}

.combo svg {
  position: absolute;
  left: 4px;
  top: 2px;
  width: 16px;
  height: 16px;
}

.combo select {
  padding-left: 20px;
}

.combo .caret {
  position: absolute;
  right: 5px;
}

.panes {
  flex: 1;
  display: grid;
  grid-template-columns: 200px minmax(0, 1fr);
  gap: 3px;
}

.categories,
.parts {
  border: 1px solid #808080;
  background: #fff;
}

.panes header {
  display: flex;
  justify-content: space-between;
  height: 22px;
  padding: 0 3px 0 2px;
  background: linear-gradient(90deg, #747474, #9c9c9c);
}

.parts header {
  background: linear-gradient(90deg, #747474, #9c9c9c 200px);
}

.panes h3 {
  font-family: "Open Sans", sans-serif;
  font-size: 14px;
  line-height: 24px;
}

.panes header button {
  width: 16px;
  height: 15px;
  margin-top: 4px;
  display: flex;
  align-items: center;
  justify-content: center;
  border: 1px solid #fff;
  border-radius: 2px;
}

.panes header svg {
  width: 9px;
  height: 9px;
}

.tree {
  list-style: none;
}

.tree li {
  display: flex;
  align-items: center;
  height: 20px;
}

.tree svg {
  width: 16px;
  height: 16px;
  margin-left: 3px;
}

.tree span {
  margin-left: 2px;
  padding: 0 2px;
  line-height: 20px;
}

.tree .selected {
  background: #3399ff;
  color: #fff;
}

/* one cell of the tree lines */
.cell {
  display: flex;
  align-items: center;
  width: 19px;
  height: 20px;
  padding-left: 4px;
  background-repeat: no-repeat;
}

.cell.trunk {
  background-image: linear-gradient(#808080, #808080);
  background-size: 1px 20px;
  background-position: 8px 0;
}

.cell.first,
.cell.tee,
.cell.end {
  background-image: linear-gradient(#808080, #808080), linear-gradient(#808080, #808080);
  background-size: 1px 20px, 11px 1px;
  background-position: 8px 0, 8px 10px;
}

.cell.first {
  background-size: 1px 10px, 11px 1px;
  background-position: 8px 10px, 8px 10px;
}

.cell.end {
  background-size: 1px 10px, 11px 1px;
}

.cell button {
  width: 9px;
  height: 9px;
  border: 1px solid #808080;
  background: linear-gradient(#000, #000) center / 5px 1px no-repeat #fff;
}

.items {
  display: flex;
  padding-top: 2px;
}

.items figure {
  width: 114px;
  display: flex;
  flex-direction: column;
  align-items: center;
}

.items svg {
  width: 60px;
  height: 45px;
}

.items figcaption {
  line-height: 24px;
  white-space: nowrap;
}

.frame footer {
  position: relative;
  display: flex;
  align-items: flex-start;
  height: 39px;
  padding: 6px 5px 0 6px;
}

.help,
.done {
  height: 26px;
  border: 1px solid #707070;
  border-radius: 3px;
  background: linear-gradient(#f3f3f3, #ebebeb 50%, #dadada 50%, #cfcfcf);
  box-shadow: inset 0 0 0 1px #fcfcfc;
}

.help {
  width: 26px;
  display: flex;
  align-items: center;
  justify-content: center;
}

.help svg {
  width: 16px;
  height: 16px;
}

.help text {
  font: bold 11px "DejaVu Sans", sans-serif;
  fill: #11118a;
}

.frame output {
  flex: 1;
  margin-left: 168px;
  line-height: 16px;
}

.done {
  width: 87px;
  font-size: 12px;
}

.cursor {
  position: absolute;
  left: 448px;
  top: 22px;
  width: 14px;
  height: 24px;
  z-index: 1;
}

.grip {
  position: absolute;
  right: 1px;
  bottom: 2px;
  width: 11px;
  height: 11px;
  background: conic-gradient(#777 25%, transparent 0) 0 0 / 4px 4px;
  clip-path: polygon(100% 0, 100% 100%, 0 100%);
}

/* view tools on the right */
.view-tools {
  position: relative;
  width: 160px;
  display: flex;
  flex-direction: column;
  align-items: flex-end;
  padding: 6px 2px 0 0;
}

.win-buttons {
  display: flex;
  gap: 8px;
}

.win-buttons svg {
  width: 12px;
  height: 12px;
  filter: drop-shadow(0 0 1px #000);
}

.cube {
  width: 72px;
  height: 80px;
  margin: 31px 24px 16px 0;
  filter: drop-shadow(0 3px 5px rgba(0, 0, 0, .35));
}

.cube text {
  font: bold 8px "Liberation Sans", sans-serif;
  fill: #666b75;
}

.navbar {
  width: 33px;
  display: flex;
  flex-direction: column;
  align-items: center;
  gap: 8px;
  padding: 3px;
  border: 1px solid #444a56;
  border-radius: 6px;
  background: #7e838d;
  box-shadow: inset 0 0 0 1px #92969f;
}

.navbar .mini {
  width: 9px;
  height: 9px;
  margin-left: 18px;
}

.navbar svg {
  width: 16px;
  height: 16px;
}

.navbar .wheel {
  width: 22px;
  height: 22px;
}

.navbar .caret {
  border-width: 3px;
  border-bottom: none;
  border-top-color: #565b66;
}

.navbar hr {
  width: 100%;
  margin: 0 0 -3px;
  border: none;
  border-top: 1px solid #5d626c;
}
```
